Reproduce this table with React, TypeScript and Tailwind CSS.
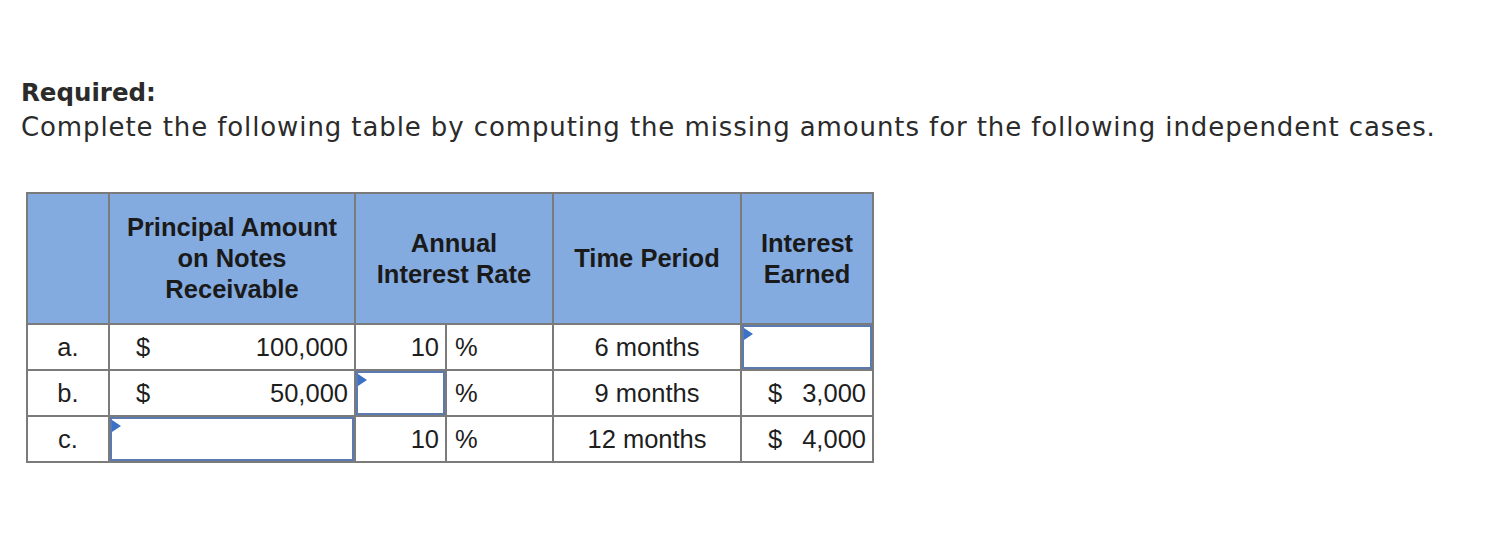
import React from 'react';

function InputBox({ className = '' }: { className?: string }) {
  return (
    <div className={`relative h-full w-full border-2 border-[#5b7bb0] bg-white ${className}`}>
      <span className="absolute left-0 top-[1px] h-0 w-0 border-y-[6px] border-l-[9px] border-y-transparent border-l-[#3c72c6]" />
    </div>
  );
}

const cell = 'border-2 border-[#7b7b7b] p-0';

export default function App() {
  return (
    <div className="min-h-[540px] w-[1494px] bg-white pt-[75px] pl-[21px]">
      <div className="h-[70px] font-['DejaVu_Sans',sans-serif] text-[26px] leading-[35px] tracking-[0.9px] text-[#2b2b2b]">
        <p className="text-[24.5px] font-bold tracking-normal">Required:</p>
        <p>Complete the following table by computing the missing amounts for the following independent cases.</p>
      </div>

      <table className="mt-[47px] ml-[5px] border-collapse font-['Liberation_Sans',Arial,sans-serif] text-[25.5px] text-[#1e1e1e]">
        <colgroup>
          <col className="w-[82px]" />
          <col className="w-[246px]" />
          <col className="w-[91px]" />
          <col className="w-[107px]" />
          <col className="w-[188px]" />
          <col className="w-[132px]" />
        </colgroup>
        <thead>
          <tr className="h-[131px] bg-[#84abe0] text-center font-bold leading-[31px] text-[#1a1a1a]">
            <th className={cell}></th>
            <th className={cell}>Principal Amount<br />on Notes<br />Receivable</th>
            <th className={cell} colSpan={2}>Annual<br />Interest Rate</th>
            <th className={cell}>Time Period</th>
            <th className={cell}>Interest<br />Earned</th>
          </tr>
        </thead>
        <tbody className="leading-[28px]">
          <tr className="h-[46px]">
            <td className={`${cell} text-center`}>a.</td>
            <td className={cell}>
              <div className="flex justify-between pr-[6px] pl-[26px]"><span>$</span><span>100,000</span></div>
            </td>
            <td className={`${cell} pr-[6px] text-right`}>10</td>
            <td className={`${cell} pl-[8px]`}>%</td>
            <td className={`${cell} text-center`}>6 months</td>
            <td className={`${cell} h-[46px]`}><InputBox /></td>
          </tr>
          <tr className="h-[46px]">
            <td className={`${cell} text-center`}>b.</td>
            <td className={cell}>
              <div className="flex justify-between pr-[6px] pl-[26px]"><span>$</span><span>50,000</span></div>
            </td>
            <td className={`${cell} h-[46px]`}><InputBox /></td>
            <td className={`${cell} pl-[8px]`}>%</td>
            <td className={`${cell} text-center`}>9 months</td>
            <td className={cell}>
              <div className="flex justify-between pr-[6px] pl-[26px]"><span>$</span><span>3,000</span></div>
            </td>
          </tr>
          <tr className="h-[46px]">
            <td className={`${cell} text-center`}>c.</td>
            <td className={`${cell} h-[46px]`}><InputBox /></td>
            <td className={`${cell} pr-[6px] text-right`}>10</td>
            <td className={`${cell} pl-[8px]`}>%</td>
            <td className={`${cell} text-center`}>12 months</td>
            <td className={cell}>
              <div className="flex justify-between pr-[6px] pl-[26px]"><span>$</span><span>4,000</span></div>
            </td>
          </tr>
        </tbody>
      </table>
    </div>
  );
}
